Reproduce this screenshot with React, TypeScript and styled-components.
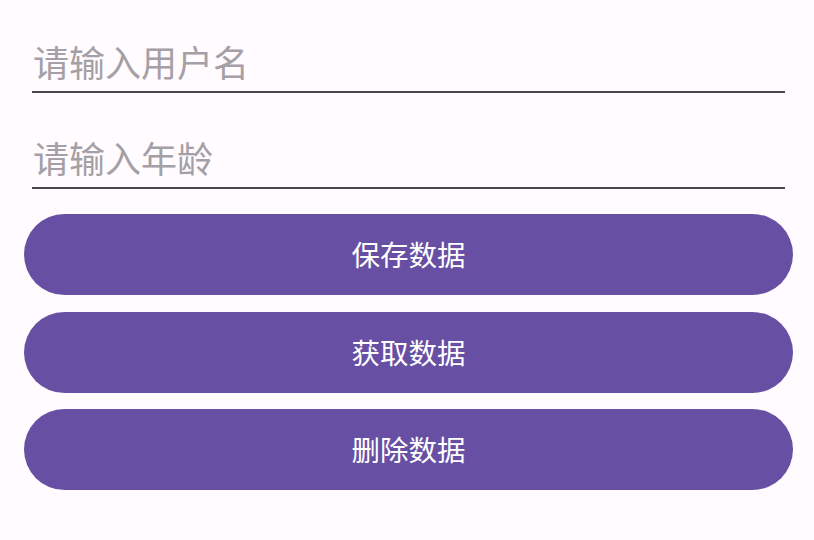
import React from "react"
import styled, { createGlobalStyle } from "styled-components"

const GlobalStyle = createGlobalStyle`
    html, body {
        margin: 0;
        padding: 0;
        background-color: #fffbfe;
    }
    body {
        font-family: "Noto Sans CJK SC", "Noto Sans", sans-serif;
    }
`

const Page = styled.div`
    display: flex;
    flex-flow: column nowrap;
    padding-top: 37px;
    width: 814px;
    height: 540px;
    box-sizing: border-box;
`

const Fields = styled.div`
    display: flex;
    flex-flow: column nowrap;
    gap: 40px;
    margin-left: 32px;
    width: 753px;
`

const Field = styled.input`
    display: block;
    box-sizing: border-box;
    width: 100%;
    height: 56px;
    margin: 0;
    padding: 0 0 7px 1px;
    border: none;
    border-bottom: 2px solid #4a454f;
    background: transparent;
    outline: none;
    font-family: "Noto Sans CJK SC", "Noto Sans", sans-serif;
    font-size: 36px;
    color: #1d1b20;

    &::placeholder {
        color: #a4a0a6;
    }
`

const Actions = styled.div`
    display: flex;
    flex-flow: column nowrap;
    gap: 16.5px;
    margin-top: 25px;
    margin-left: 24px;
    width: 769px;
`

const ActionButton = styled.button`
    height: 81px;
    border: none;
    border-radius: 41px;
    background-color: #6750a4;
    color: #ffffff;
    font-family: "Noto Sans CJK SC", "Noto Sans", sans-serif;
    font-size: 28.5px;
    padding: 0 0 2px 0;
    cursor: pointer;
`

const buttons = ["保存数据", "获取数据", "删除数据"]

export default function App() {
    return (
        <Page>
            <GlobalStyle />
            <Fields>
                <Field placeholder="请输入用户名" />
                <Field placeholder="请输入年龄" />
            </Fields>
            <Actions>
                {buttons.map((label) => (
                    <ActionButton key={label}>{label}</ActionButton>
                ))}
            </Actions>
        </Page>
    )
}
